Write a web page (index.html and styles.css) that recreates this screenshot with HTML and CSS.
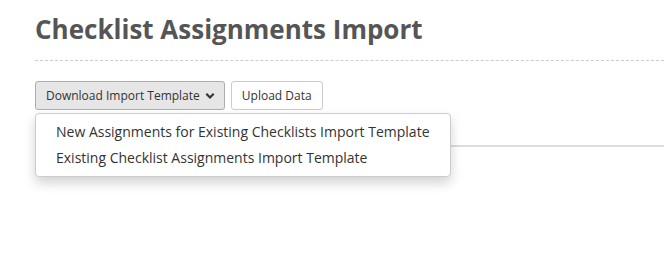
FILE: index.html
```html
<!DOCTYPE html>
<html lang="en">
<head>
    <meta charset="UTF-8">
    <title>Checklist Assignments Import</title>
    <link rel="stylesheet" href="styles.css">
</head>
<body>
    <div class="page">
        <h1 class="page-title">Checklist Assignments Import</h1>

        <div class="toolbar">
            <div class="dropdown">
                <button class="btn btn-active">Download Import Template
                    <svg class="caret" width="10" height="8" viewBox="0 0 10 8">
                        <path d="M1.3 1.8 L5 5.5 L8.7 1.8" fill="none" stroke="#333" stroke-width="2.2"/>
                    </svg>
                </button>
                <ul class="dropdown-menu">
                    <li><a href="#">New Assignments for Existing Checklists Import Template</a></li>
                    <li><a href="#">Existing Checklist Assignments Import Template</a></li>
                </ul>
            </div>
            <button class="btn">Upload Data</button>
        </div>

        <div class="tabs"></div>
    </div>
</body>
</html>
```

FILE: styles.css
```css
* {
    margin: 0;
    padding: 0;
    box-sizing: border-box;
}

html, body {
    height: 100%;
}

body {
    background: #fff;
    color: #333;
    font-family: "Open Sans", sans-serif;
}

.page {
    min-height: 256px;
    padding: 11px 0 0 35px;
}

/* Title */
.page-title {
    font-size: 26px;
    font-weight: 700;
    color: #555;
    line-height: 36px;
    padding-bottom: 13px;
    border-bottom: 1px dashed #ccc;
}

/* Toolbar */
.toolbar {
    display: flex;
    gap: 6px;
    margin-top: 20px;
}

.dropdown {
    position: relative;
}

.btn {
    display: flex;
    align-items: center;
    gap: 5px;
    height: 29px;
    padding: 0 10px;
    font-family: "Open Sans", sans-serif;
    font-size: 12px;
    color: #333;
    background: #fff;
    border: 1px solid #ccc;
    border-radius: 3px;
}

.btn-active {
    background: #e6e6e6;
    border-color: #adadad;
    padding-right: 9px;
}

.caret {
    margin-top: 1px;
}

.dropdown-menu {
    position: absolute;
    top: 32px;
    left: 0;
    z-index: 2;
    width: 416px;
    list-style: none;
    background: #fff;
    border: 1px solid #ccc;
    border-radius: 4px;
    padding: 5px 0;
    box-shadow: 0 6px 12px rgba(0, 0, 0, 0.175);
}

.dropdown-menu li a {
    display: block;
    padding: 2px 20px;
    font-size: 14px;
    line-height: 22px;
    color: #333;
    text-decoration: none;
}

/* Tabs line */
.tabs {
    margin-top: 35px;
    border-bottom: 2px solid #ddd;
}
```
